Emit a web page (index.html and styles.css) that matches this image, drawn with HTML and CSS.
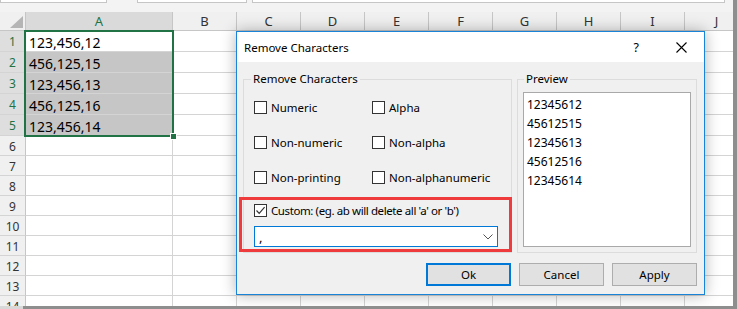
FILE: index.html
```html
<!DOCTYPE html>
<html>
<head>
    <title>Remove Characters</title>
    <link rel="stylesheet" href="styles.css">
</head>
<body>
    <div class="frame">
        <div class="formula-strip">
            <div class="fbox name-box"></div>
            <div class="fbox func-box"></div>
            <div class="fbox formula-box"></div>
        </div>

        <div class="sheet">
            <div class="row head-row">
                <div class="rh corner"><span class="corner-tri"></span></div>
                <div class="ch col-a sel">A</div>
                <div class="ch">B</div>
                <div class="ch">C</div>
                <div class="ch">D</div>
                <div class="ch">E</div>
                <div class="ch">F</div>
                <div class="ch">G</div>
                <div class="ch">H</div>
                <div class="ch">I</div>
                <div class="ch">J</div>
            </div>
            <div class="row tall">
                <div class="rh sel">1</div>
                <div class="cell col-a">123,456,12</div>
                <div class="cell rest"></div>
            </div>
            <div class="row tall">
                <div class="rh sel">2</div>
                <div class="cell col-a picked">456,125,15</div>
                <div class="cell rest"></div>
            </div>
            <div class="row tall">
                <div class="rh sel">3</div>
                <div class="cell col-a picked">123,456,13</div>
                <div class="cell rest"></div>
            </div>
            <div class="row tall">
                <div class="rh sel">4</div>
                <div class="cell col-a picked">456,125,16</div>
                <div class="cell rest"></div>
            </div>
            <div class="row tall">
                <div class="rh sel">5</div>
                <div class="cell col-a picked">123,456,14</div>
                <div class="cell rest"></div>
            </div>
            <div class="row"><div class="rh">6</div><div class="cell col-a"></div><div class="cell rest"></div></div>
            <div class="row"><div class="rh">7</div><div class="cell col-a"></div><div class="cell rest"></div></div>
            <div class="row"><div class="rh">8</div><div class="cell col-a"></div><div class="cell rest"></div></div>
            <div class="row"><div class="rh">9</div><div class="cell col-a"></div><div class="cell rest"></div></div>
            <div class="row"><div class="rh">10</div><div class="cell col-a"></div><div class="cell rest"></div></div>
            <div class="row"><div class="rh">11</div><div class="cell col-a"></div><div class="cell rest"></div></div>
            <div class="row"><div class="rh">12</div><div class="cell col-a"></div><div class="cell rest"></div></div>
            <div class="row"><div class="rh">13</div><div class="cell col-a"></div><div class="cell rest"></div></div>
            <div class="row"><div class="rh">14</div><div class="cell col-a"></div><div class="cell rest"></div></div>
        </div>

        <!-- selection outline over A1:A5 -->
        <div class="selection"><span class="fill-handle"></span></div>

        <div class="dialog">
            <div class="title-bar">
                <span class="title">Remove Characters</span>
                <span class="help">?</span>
                <svg class="close" width="11" height="11" viewBox="0 0 11 11">
                    <path d="M0.5 0.5 L10.5 10.5 M10.5 0.5 L0.5 10.5" stroke="#000" stroke-width="1.1" fill="none"/>
                </svg>
            </div>
            <div class="dialog-body">
                <div class="groups">
                    <fieldset class="group remove-group">
                        <legend>Remove Characters</legend>
                        <div class="options">
                            <label class="opt"><span class="box"></span>Numeric</label>
                            <label class="opt"><span class="box"></span>Alpha</label>
                            <label class="opt"><span class="box"></span>Non-numeric</label>
                            <label class="opt"><span class="box"></span>Non-alpha</label>
                            <label class="opt"><span class="box"></span>Non-printing</label>
                            <label class="opt"><span class="box"></span>Non-alphanumeric</label>
                        </div>
                        <label class="opt custom">
                            <span class="box">
                                <svg width="11" height="11" viewBox="0 0 11 11">
                                    <path d="M1.5 5.5 L4.2 8.3 L9.6 2.2" stroke="#333" stroke-width="1.2" fill="none"/>
                                </svg>
                            </span><span class="custom-text">Custom: (eg. ab will delete all 'a' or 'b')</span>
                        </label>
                        <div class="combo">
                            <span class="combo-value">,</span>
                            <svg width="10" height="6" viewBox="0 0 10 6">
                                <path d="M0.5 0.5 L5 5 L9.5 0.5" stroke="#555" stroke-width="1" fill="none"/>
                            </svg>
                        </div>
                    </fieldset>
                    <fieldset class="group preview-group">
                        <legend>Preview</legend>
                        <div class="preview-list">
                            <div>12345612</div>
                            <div>45612515</div>
                            <div>12345613</div>
                            <div>45612516</div>
                            <div>12345614</div>
                        </div>
                    </fieldset>
                </div>
                <div class="buttons">
                    <button class="btn default">Ok</button>
                    <button class="btn">Cancel</button>
                    <button class="btn">Apply</button>
                </div>
            </div>
            <!-- red annotation box -->
            <div class="highlight"></div>
        </div>
    </div>
</body>
</html>
```

FILE: styles.css
```css
body {
    margin: 0;
    width: 737px;
    height: 309px;
    overflow: hidden;
    background: linear-gradient(to right, #d8d8d8 0 23px, #8e8e8e 23px);
}
.frame {
    position: relative;
    width: 733px;
    height: 306px;
    overflow: hidden;
    background: #fff;
    font-family: "Noto Sans", sans-serif;
}

/* formula bar remains */
.formula-strip {
    display: flex;
    height: 12px;
    background: #f3f3f3;
}
.fbox {
    height: 3px;
    background: #fff;
    border: 1px solid #c6c6c6;
    border-top: none;
    box-sizing: border-box;
}
.name-box {
    width: 107px;
}
.func-box {
    width: 110px;
    margin-left: 30px;
}
.formula-box {
    width: 473px;
    margin-left: 5px;
}

/* sheet grid */
.row {
    display: flex;
    height: 20px;
}
.row.tall {
    height: 21px;
}
.head-row {
    height: 19px;
}
.rh {
    flex: none;
    width: 26px;
    box-sizing: border-box;
    background: #f0f0f0;
    border-right: 1px solid #c6c6c6;
    border-bottom: 1px solid #d4d4d4;
    text-align: center;
    font-size: 12px;
    line-height: 20px;
    padding-top: 1px;
    color: #333;
}
.rh.sel {
    background: #dedede;
    color: #217346;
}
.corner {
    display: flex;
    align-items: flex-end;
    justify-content: flex-end;
    padding: 0 2px 2px 0;
    border-bottom-color: #c6c6c6;
}
.corner-tri {
    width: 13px;
    height: 12px;
    background: #b5b5b5;
    clip-path: polygon(100% 0, 100% 100%, 0 100%);
}
.ch {
    flex: none;
    width: 64px;
    box-sizing: border-box;
    background: #f0f0f0;
    border-right: 1px solid #c6c6c6;
    border-bottom: 1px solid #c6c6c6;
    text-align: center;
    font-size: 13px;
    line-height: 18px;
    color: #333;
}
.ch.sel {
    background: #dadada;
    color: #217346;
}
.col-a {
    width: 147px;
}
.cell {
    flex: none;
    box-sizing: border-box;
    border-right: 1px solid #d4d4d4;
    border-bottom: 1px solid #d4d4d4;
    font-size: 14px;
    line-height: 20px;
    padding: 2px 0 0 3px;
    color: #000;
}
.cell.picked {
    background: #c6c6c6;
}
.cell.rest {
    flex: 1;
    border-right: none;
    background-image: repeating-linear-gradient(to right, transparent 0 63px, #d4d4d4 63px 64px);
}

.selection {
    position: absolute;
    left: 24px;
    top: 30px;
    width: 150px;
    height: 107px;
    box-sizing: border-box;
    border: 2px solid #217346;
}
.fill-handle {
    position: absolute;
    right: -5px;
    bottom: -5px;
    width: 5px;
    height: 5px;
    background: #217346;
    border: 1px solid #fff;
}

/* dialog */
.dialog {
    position: absolute;
    left: 236px;
    top: 31px;
    width: 469px;
    height: 264px;
    box-sizing: border-box;
    border: 1px solid #1883d7;
    background: #f0f0f0;
    box-shadow: 0 0 14px rgba(0, 0, 0, 0.3);
    font-size: 11.5px;
    color: #000;
}
.title-bar {
    display: flex;
    align-items: center;
    height: 30px;
    background: #fff;
    padding-left: 7px;
}
.title {
    flex: 1;
}
.help {
    font-size: 12.5px;
}
.close {
    margin: 0 17px 0 37px;
}
.dialog-body {
    padding: 9px 7px 8px 6px;
}
.groups {
    display: flex;
    gap: 5px;
}
.group {
    margin: 0;
    min-width: 0;
    box-sizing: border-box;
    border: 1px solid #dcdcdc;
    padding: 0;
}
.group legend {
    padding: 0 2px;
    line-height: 16px;
}
.remove-group {
    width: 269px;
    padding: 10px 13px 5px 10px;
}
.remove-group legend {
    margin-left: -3px;
}
.preview-group {
    width: 180px;
    padding: 5px 5px;
}
.preview-group legend {
    margin-left: 1px;
}
.options {
    display: grid;
    grid-template-columns: 118px auto;
    row-gap: 15px;
}
.opt {
    display: flex;
    align-items: center;
    gap: 4px;
    height: 20px;
    white-space: nowrap;
}
.box {
    display: flex;
    align-items: center;
    justify-content: center;
    width: 13px;
    height: 13px;
    box-sizing: border-box;
    border: 1px solid #333;
    background: #fff;
}
.custom {
    margin-top: 13px;
}
.custom-text {
    letter-spacing: -0.4px;
}
.combo {
    display: flex;
    align-items: center;
    justify-content: space-between;
    height: 21px;
    margin-top: 6px;
    box-sizing: border-box;
    border: 1px solid #0078d7;
    background: #fff;
    padding: 0 4px 0 4px;
}
.combo-value {
    font-size: 13px;
    line-height: 13px;
    padding-top: 2px;
}
.preview-list {
    height: 155px;
    box-sizing: border-box;
    border: 1px solid #a9a9a9;
    background: #fff;
    padding: 2px 3px;
    font-size: 12px;
    line-height: 19px;
}
.buttons {
    display: flex;
    justify-content: flex-end;
    gap: 8px;
    margin-top: 10px;
}
.btn {
    width: 85px;
    height: 23px;
    box-sizing: border-box;
    border: 1px solid #adadad;
    background: #e1e1e1;
    font-family: "Noto Sans", sans-serif;
    font-size: 11.5px;
    color: #000;
    padding: 0;
}
.btn.default {
    border: 2px solid #0078d7;
}
.highlight {
    position: absolute;
    left: 2px;
    top: 165px;
    width: 273px;
    height: 55px;
    box-sizing: border-box;
    border: 3px solid #ef3b3b;
}
```
